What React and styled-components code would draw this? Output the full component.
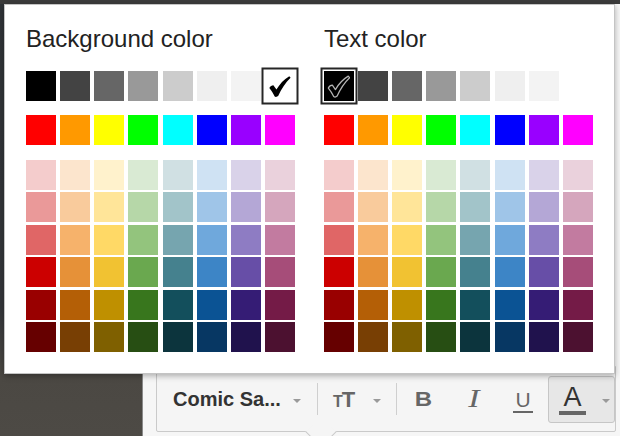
import React from "react";
import styled, { createGlobalStyle } from "styled-components";

const GlobalStyle = createGlobalStyle`
  html, body {
    margin: 0;
    padding: 0;
    background: #3a3a3a;
  }
  body {
    font-family: "Liberation Sans", Arial, sans-serif;
  }
`;

const greys = ["#000000", "#434343", "#666666", "#999999", "#cccccc", "#efefef", "#f3f3f3", "#ffffff"];
const brights = ["#ff0000", "#ff9900", "#ffff00", "#00ff00", "#00ffff", "#0000ff", "#9900ff", "#ff00ff"];
const shades = [
  ["#f4cccc", "#fce5cd", "#fff2cc", "#d9ead3", "#d0e0e3", "#cfe2f3", "#d9d2e9", "#ead1dc"],
  ["#ea9999", "#f9cb9c", "#ffe599", "#b6d7a8", "#a2c4c9", "#9fc5e8", "#b4a7d6", "#d5a6bd"],
  ["#e06666", "#f6b26b", "#ffd966", "#93c47d", "#76a5af", "#6fa8dc", "#8e7cc3", "#c27ba0"],
  ["#cc0000", "#e69138", "#f1c232", "#6aa84f", "#45818e", "#3d85c6", "#674ea7", "#a64d79"],
  ["#990000", "#b45f06", "#bf9000", "#38761d", "#134f5c", "#0b5394", "#351c75", "#741b47"],
  ["#660000", "#783f04", "#7f6000", "#274e13", "#0c343d", "#073763", "#20124d", "#4c1130"],
];

function Check({ outline }) {
  return (
    <svg width="23" height="23" viewBox="0 0 24 24">
      <path
        d="M1.4 13.6 C2.4 11.6 4 10.6 5.6 10.6 L8.8 15.2 C12.2 9.4 16.4 4.6 22.2 1.2 L23.6 2.8 C18.4 7.8 14 14.2 10.6 22 C9.6 22.9 7.8 23.1 7 22.5 C5.4 19 3.6 16.2 1.4 13.6 Z"
        fill="#000"
        stroke={outline ? "#b5b5b5" : "none"}
        strokeWidth={outline ? 1.3 : 0}
        strokeLinejoin="round"
      />
    </svg>
  );
}

function Palette({ title, selected, outlineCheck }) {
  return (
    <PaletteColumn>
      <Heading>{title}</Heading>
      <SwatchRow>
        {greys.map((c) => (
          <Swatch key={c} $color={c} $selected={c === selected}>
            {c === selected && <Check outline={outlineCheck} />}
          </Swatch>
        ))}
      </SwatchRow>
      <SwatchRow $spaced>
        {brights.map((c) => (
          <Swatch key={c} $color={c} />
        ))}
      </SwatchRow>
      <ShadeGrid>
        {shades.flat().map((c) => (
          <Swatch key={c} $color={c} />
        ))}
      </ShadeGrid>
    </PaletteColumn>
  );
}

function App() {
  return (
    <>
      <GlobalStyle />
      <Screen>
        <TopBar />
        <Main>
          <SidePane />
          <DocPane>
            <Toolbar>
              <FontName>Comic Sa...</FontName>
              <Caret $left={11} />
              <Divider $left={16} />
              <SizeIcon>
                <SmallT>T</SmallT>
                <BigT>T</BigT>
              </SizeIcon>
              <Caret $left={18} />
              <Divider $left={15} />
              <Bold>B</Bold>
              <Italic>I</Italic>
              <Underline>
                <span>U</span>
              </Underline>
              <ColorButton>
                <ColorGlyph>
                  A
                  <ColorBar />
                </ColorGlyph>
                <Caret $left={16} />
              </ColorButton>
            </Toolbar>
          </DocPane>
        </Main>
        <Popup>
          <Palette title="Background color" selected="#ffffff" />
          <Palette title="Text color" selected="#000000" outlineCheck />
        </Popup>
      </Screen>
    </>
  );
}

export default App;

const Screen = styled.div`
  position: relative;
  width: 620px;
  height: 436px;
  overflow: hidden;
  display: flex;
  flex-direction: column;
  background: #3a3a3a;
`;

const TopBar = styled.div`
  height: 4px;
  background: #3b3b3b;
`;

const Main = styled.div`
  flex: 1;
  display: flex;
`;

const SidePane = styled.div`
  width: 142px;
  background: linear-gradient(#2f3337 0%, #34363a 70%, #4b4843 86%, #4d4a45 100%);
`;

const DocPane = styled.div`
  flex: 1;
  display: flex;
  flex-direction: column;
  justify-content: flex-end;
  background: #f6f6f6;
  border-left: 1px solid #8a8a8a;
  padding: 0 4px 4px 13px;
`;

const Toolbar = styled.div`
  position: relative;
  height: 66px;
  box-sizing: border-box;
  display: flex;
  align-items: center;
  padding: 0 0 0 16px;
  background: #f5f5f5;
  border: 1px solid #cacaca;
  border-radius: 0 0 2px 2px;

  &::after {
    content: "";
    position: absolute;
    left: 153px;
    bottom: -12px;
    width: 21px;
    height: 21px;
    background: #f5f5f5;
    border-right: 1px solid #cacaca;
    border-bottom: 1px solid #cacaca;
    transform: rotate(45deg);
  }
`;

const FontName = styled.span`
  width: 109px;
  white-space: nowrap;
  font-size: 20px;
  font-weight: bold;
  color: #333;
  line-height: 24px;
`;

const Caret = styled.span`
  flex: none;
  margin-left: ${(p) => p.$left}px;
  width: 0;
  height: 0;
  border-left: 4px solid transparent;
  border-right: 4px solid transparent;
  border-top: 4px solid #9a9a9a;
  margin-top: 3px;
`;

const Divider = styled.span`
  flex: none;
  margin-left: ${(p) => p.$left}px;
  width: 1px;
  height: 32px;
  background: #cfcfcf;
`;

const SizeIcon = styled.span`
  margin-left: 15px;
  width: 22px;
  display: flex;
  align-items: baseline;
  color: #666;
  font-weight: bold;
  line-height: 20px;
  margin-top: 4px;
`;

const SmallT = styled.span`
  font-size: 16px;
`;

const BigT = styled.span`
  font-size: 22px;
  margin-left: -1px;
`;

const Bold = styled.span`
  margin-left: 18px;
  width: 17px;
  text-align: center;
  font-size: 20px;
  font-weight: bold;
  color: #666;
  transform: scaleX(1.2);
`;

const Italic = styled.span`
  margin-left: 31px;
  width: 22px;
  text-align: center;
  font-family: "Liberation Serif", "Times New Roman", serif;
  font-style: italic;
  font-size: 25px;
  color: #666;
  transform: scaleX(1.35);
`;

const Underline = styled.span`
  margin-left: 28px;
  width: 20px;
  display: flex;
  justify-content: center;
  font-size: 21px;
  line-height: 21px;
  color: #666;
  border-bottom: 2px solid #666;
  margin-top: 4px;
  padding-bottom: 1px;
`;

const ColorButton = styled.div`
  margin-left: 15px;
  display: flex;
  align-items: center;
  width: 67px;
  height: 47px;
  box-sizing: border-box;
  padding-left: 10px;
  background: #e7e7e7;
  border: 1px solid #c6c6c6;
  border-radius: 3px;
`;

const ColorGlyph = styled.span`
  display: flex;
  flex-direction: column;
  align-items: center;
  width: 27px;
  font-size: 27px;
  line-height: 26px;
  color: #333;
`;

const ColorBar = styled.span`
  margin-top: 1px;
  width: 27px;
  height: 4px;
  background: #666;
`;

const Popup = styled.div`
  position: absolute;
  left: 4px;
  top: 4px;
  width: 611px;
  height: 370px;
  box-sizing: border-box;
  display: flex;
  gap: 29px;
  padding: 20px 0 0 21px;
  background: #fff;
  border: 1px solid #c4c4c4;
  box-shadow: 0 2px 6px rgba(0, 0, 0, 0.3);
`;

const PaletteColumn = styled.div`
  display: flex;
  flex-direction: column;
`;

const Heading = styled.div`
  margin: 0 0 18px 0;
  font-size: 24px;
  line-height: 28px;
  color: #222;
`;

const SwatchRow = styled.div`
  display: flex;
  gap: 4.14px;
  margin-top: ${(p) => (p.$spaced ? "14px" : "0")};
  margin-bottom: ${(p) => (p.$spaced ? "15px" : "0")};
`;

const ShadeGrid = styled.div`
  display: grid;
  grid-template-columns: repeat(8, 30px);
  grid-auto-rows: 30px;
  column-gap: 4.14px;
  row-gap: 2.4px;
`;

const Swatch = styled.div`
  width: 30px;
  height: 30px;
  box-sizing: border-box;
  display: flex;
  align-items: center;
  justify-content: center;
  background: ${(p) => p.$color};
  box-shadow: ${(p) =>
    p.$selected ? "0 0 0 1.5px #fff, 0 0 0 3.5px #262626" : "none"};
`;
